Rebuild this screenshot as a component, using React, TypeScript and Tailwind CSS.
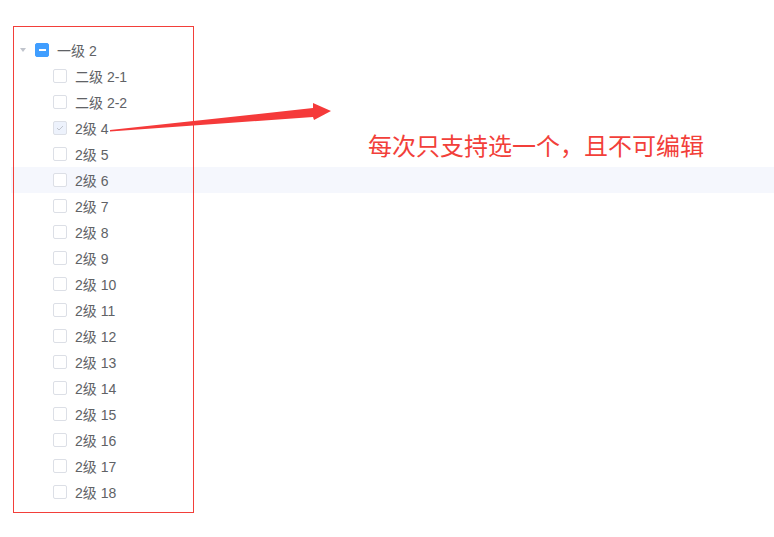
import React from "react";

type Node = { label: string; checked?: boolean; disabled?: boolean; hover?: boolean };

const children: Node[] = [
  { label: "二级 2-1" },
  { label: "二级 2-2" },
  { label: "2级 4", checked: true, disabled: true },
  { label: "2级 5" },
  { label: "2级 6", hover: true },
  ...Array.from({ length: 12 }, (_, i) => ({ label: `2级 ${i + 7}` })),
];

function Checkbox({ checked, disabled, indeterminate }: { checked?: boolean; disabled?: boolean; indeterminate?: boolean }) {
  if (indeterminate) {
    return (
      <span className="flex h-[14px] w-[14px] shrink-0 items-center justify-center rounded-[2px] border border-[#409eff] bg-[#409eff]">
        <span className="h-[2px] w-[7px] bg-white" />
      </span>
    );
  }
  if (checked && disabled) {
    return (
      <span className="flex h-[14px] w-[14px] shrink-0 items-center justify-center rounded-[2px] border border-[#dcdfe6] bg-[#edf2fc]">
        <svg width="8" height="6" viewBox="0 0 8 6" fill="none">
          <path d="M1 3l2 2 4-4" stroke="#c0c4cc" strokeWidth="1" />
        </svg>
      </span>
    );
  }
  return <span className="h-[14px] w-[14px] shrink-0 rounded-[2px] border border-[#dcdfe6] bg-white" />;
}

function Row({ node, level }: { node: Node; level: number }) {
  return (
    <div className={`flex h-[26px] items-center ${node.hover ? "bg-[#f5f7fd]" : ""}`}>
      <div style={{ width: level * 18 }} className="shrink-0" />
      <span className="flex w-[24px] shrink-0 justify-center">
        {level === 0 && (
          <span className="h-0 w-0 border-x-[3.5px] border-t-[4px] border-x-transparent border-t-[#c0c4cc]" />
        )}
      </span>
      <Checkbox checked={node.checked} disabled={node.disabled} indeterminate={level === 0} />
      <span className="ml-2 pt-[2px] text-[14px] text-[#606266]">{node.label}</span>
    </div>
  );
}

export default function App() {
  return (
    <div
      className="relative h-[537px] w-[774px] overflow-hidden bg-white"
      style={{ fontFamily: '"Liberation Sans", "Noto Sans CJK SC", sans-serif' }}
    >
      <div className="ml-[11px] pt-[37px]">
        <Row node={{ label: "一级 2" }} level={0} />
        {children.map((c) => (
          <Row key={c.label} node={c} level={1} />
        ))}
      </div>

      {/* annotation: frame around the tree */}
      <div className="absolute left-[13px] top-[26px] h-[487px] w-[181px] border border-[#f23f3a]" />

      {/* annotation: arrow */}
      <svg className="absolute left-0 top-0" width="774" height="537">
        <path d="M110 130 L313 108 L313 103 L331 111 L314 120 L313 117 L110 131.5 Z" fill="#f53a3a" />
      </svg>

      <div className="absolute left-[368px] top-[135px] text-[24px] leading-6 text-[#f23f3a]">
        每次只支持选一个，且不可编辑
      </div>
    </div>
  );
}
